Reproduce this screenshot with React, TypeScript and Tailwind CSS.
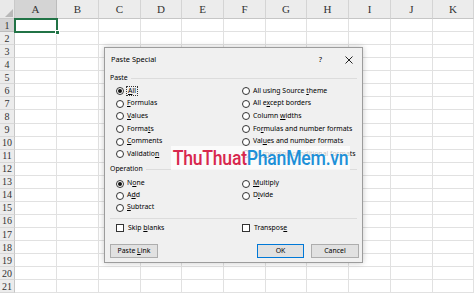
import React from "react";

const COLS = ["A", "B", "C", "D", "E", "F", "G", "H", "I", "J", "K"];
const WIDTHS = [42, 42, 42, 41, 42, 42, 41, 42, 42, 42, 41];
const ROWS = Array.from({ length: 21 }, (_, i) => i + 1);

function U({ text, k }: { text: string; k: number }) {
  return (
    <span>
      {text.slice(0, k)}
      <span className="underline underline-offset-[1px]">{text.charAt(k)}</span>
      {text.slice(k + 1)}
    </span>
  );
}

function Radio({ checked = false }: { checked?: boolean }) {
  return (
    <span className="w-[8px] h-[8px] rounded-full border border-[#333] bg-white flex items-center justify-center shrink-0">
      {checked && <span className="w-[4px] h-[4px] rounded-full bg-[#111]" />}
    </span>
  );
}

function Box() {
  return <span className="w-[8px] h-[8px] border border-[#333] bg-white shrink-0" />;
}

function RadioRow({ text, k, checked, focus, h = "h-[12.6px]" }: { text: string; k: number; checked?: boolean; focus?: boolean; h?: string }) {
  return (
    <div className={`${h} flex items-center gap-[3px] whitespace-nowrap`}>
      <Radio checked={checked} />
      <span className={focus ? "outline outline-1 outline-dotted outline-[#333] px-[1px] leading-[8px]" : ""}>
        <U text={text} k={k} />
      </span>
    </div>
  );
}

function GroupLabel({ text, h }: { text: string; h: string }) {
  return (
    <div className={`${h} flex items-center gap-[3px]`}>
      <span>{text}</span>
      <span className="flex-1 h-px bg-[#dcdcdc]" />
    </div>
  );
}

export default function App() {
  return (
    <div className="relative w-[474px] h-[293px] overflow-hidden bg-white" style={{ fontFamily: "'Noto Sans', sans-serif" }}>
      {/* Spreadsheet grid */}
      <div className="flex flex-col" style={{ fontFamily: "'Liberation Serif', serif" }}>
        <div className="flex h-[19px]">
          <div className="w-[15px] h-full bg-[#e9e9e9] border-r border-b border-[#c9c9c9] relative shrink-0">
            <span className="absolute right-[1px] bottom-[1px] w-0 h-0 border-l-[8px] border-l-transparent border-b-[8px] border-b-[#b8b8b8]" />
          </div>
          {COLS.map((c, i) => (
            <div
              key={c}
              className={`h-full flex items-center justify-center text-[11px] text-[#333] border-r border-b shrink-0 ${
                i === 0 ? "bg-[#d4d4d4] border-[#bcbcbc] border-b-[#217346]" : "bg-[#ececec] border-[#d4d4d4] border-b-[#c6c6c6]"
              }`}
              style={{ width: WIDTHS[i] }}
            >
              {c}
            </div>
          ))}
        </div>
        {ROWS.map((r) => (
          <div key={r} className="flex h-[13.07px]">
            <div
              className={`w-[15px] h-full flex items-center justify-center text-[10px] text-[#333] border-r border-b shrink-0 ${
                r === 1 ? "bg-[#d4d4d4] border-[#bcbcbc] border-r-[#217346]" : "bg-[#ececec] border-[#c6c6c6] border-b-[#d8d8d8]"
              }`}
            >
              {r}
            </div>
            {COLS.map((c, i) => (
              <div key={c} className="h-full border-r border-b border-[#e1e1e1] shrink-0" style={{ width: WIDTHS[i] }} />
            ))}
          </div>
        ))}
      </div>

      {/* Selected cell A1 */}
      <div className="absolute left-[14px] top-[18px] w-[44px] h-[15px] border-2 border-[#217346]">
        <span className="absolute right-[-4px] bottom-[-4px] w-[5px] h-[5px] bg-[#217346] border border-white" />
      </div>

      {/* Dialog */}
      <div className="absolute left-[104px] top-[47px] w-[259px] h-[216px] bg-[#f0f0f0] border border-[#9c9c9c] shadow-[0_0_6px_rgba(0,0,0,0.22)] flex flex-col text-[6.9px] text-[#000] leading-none">
        <div className="h-[23px] flex items-center pl-[6px] pr-[9px] text-[7.4px]">
          <span className="flex-1">Paste Special</span>
          <span className="mr-[23px] text-[7.5px]">?</span>
          <svg width="8" height="8" viewBox="0 0 8 8">
            <path d="M0.5 0.5 L7.5 7.5 M7.5 0.5 L0.5 7.5" stroke="#222" strokeWidth="1" />
          </svg>
        </div>
        <div className="px-[5px] flex flex-col">
          <GroupLabel text="Paste" h="h-[14px]" />
          <div className="grid grid-cols-[126px_1fr] pl-[6px]">
            <div className="flex flex-col">
              <RadioRow text="All" k={0} checked focus />
              <RadioRow text="Formulas" k={0} />
              <RadioRow text="Values" k={0} />
              <RadioRow text="Formats" k={5} />
              <RadioRow text="Comments" k={0} />
              <RadioRow text="Validation" k={9} />
            </div>
            <div className="flex flex-col">
              <RadioRow text="All using Source theme" k={17} />
              <RadioRow text="All except borders" k={5} />
              <RadioRow text="Column widths" k={7} />
              <RadioRow text="Formulas and number formats" k={2} />
              <RadioRow text="Values and number formats" k={3} />
              <RadioRow text="All merging conditional formats" k={4} />
            </div>
          </div>
          <GroupLabel text="Operation" h="h-[17px]" />
          <div className="grid grid-cols-[126px_1fr] pl-[6px]">
            <div className="flex flex-col">
              <RadioRow text="None" k={1} checked h="h-[12px]" />
              <RadioRow text="Add" k={1} h="h-[12px]" />
              <RadioRow text="Subtract" k={0} h="h-[12px]" />
            </div>
            <div className="flex flex-col">
              <RadioRow text="Multiply" k={0} h="h-[12px]" />
              <RadioRow text="Divide" k={1} h="h-[12px]" />
            </div>
          </div>
          <div className="mt-[4.5px] h-px bg-[#dcdcdc]" />
          <div className="grid grid-cols-[126px_1fr] pl-[6px] h-[18px] items-center">
            <div className="flex items-center gap-[4px] whitespace-nowrap">
              <Box />
              <span>
                Skip <U text="blanks" k={0} />
              </span>
            </div>
            <div className="flex items-center gap-[4px]">
              <Box />
              <U text="Transpose" k={8} />
            </div>
          </div>
          <div className="mt-[7px] flex h-[14px]">
            <button className="w-[48px] h-full bg-[#e1e1e1] border border-[#adadad] flex items-center justify-center">
              <span>
                Paste <U text="Link" k={0} />
              </span>
            </button>
            <div className="flex-1" />
            <button className="w-[47px] h-full bg-[#e1e1e1] border border-[#0078d7] flex items-center justify-center mr-[7px]">
              OK
            </button>
            <button className="w-[48px] h-full bg-[#e1e1e1] border border-[#adadad] flex items-center justify-center mr-[-2px]">
              Cancel
            </button>
          </div>
        </div>
      </div>

      {/* Watermark */}
      <div
        className="absolute left-[171px] top-[146px] px-[2px] bg-white/75 text-[21px] leading-[24px] font-medium tracking-[-0.3px] origin-left scale-x-[0.84] whitespace-nowrap"
        style={{ fontFamily: "Roboto, sans-serif" }}
      >
        <span className="text-[#d8284e]">ThuThuat</span>
        <span className="text-[#1e90d8]">PhanMem.vn</span>
      </div>
    </div>
  );
}
